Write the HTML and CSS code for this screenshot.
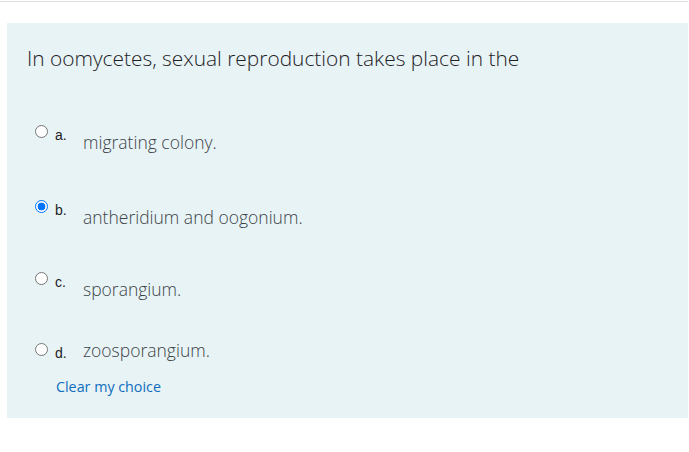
FILE: index.html
```html
<!DOCTYPE html>
<html>
<head>
<meta charset="utf-8">
<link rel="stylesheet" href="styles.css">
</head>
<body>
<div class="topline"></div>
<div class="formulation">
  <div class="qtext">In oomycetes, sexual reproduction takes place in the</div>
  <div class="answers">
    <div class="opt opt-a">
      <span class="radio"></span>
      <span class="letter">a.</span>
      <span class="ans shifted">migrating colony.</span>
    </div>
    <div class="opt opt-b">
      <span class="radio checked"></span>
      <span class="letter">b.</span>
      <span class="ans shifted">antheridium and oogonium.</span>
    </div>
    <div class="opt opt-c">
      <span class="radio"></span>
      <span class="letter">c.</span>
      <span class="ans shifted">sporangium.</span>
    </div>
    <div class="opt opt-d">
      <span class="radio"></span>
      <span class="letter">d.</span>
      <span class="ans inline">zoosporangium.</span>
    </div>
  </div>
  <a class="clear">Clear my choice</a>
</div>
</body>
</html>
```
FILE: styles.css
```css
html, body {
  margin: 0;
  padding: 0;
  background: #fff;
}
body {
  font-family: "Open Sans", "Noto Sans", sans-serif;
  color: #343a40;
}
.topline {
  height: 1px;
  margin-top: 1px;
  width: 688px;
  background: #dee2e6;
}
.formulation {
  margin: 21px 1px 0 7px;
  height: 395px;
  box-sizing: border-box;
  background: #e7f3f5;
  padding: 20px 20px 0 20px;
}
.qtext {
  font-size: 20.9px;
  line-height: 30px;
  font-weight: 300;
  color: #1d2125;
}
.answers {
  margin-top: 49.5px;
  padding-left: 8px;
}
.opt {
  display: flex;
  align-items: flex-start;
}
.opt-a { height: 75px; }
.opt-b { height: 72px; }
.opt-c { height: 71px; }
.opt-d { height: 34px; }
.radio {
  width: 11px;
  height: 11px;
  border: 1px solid #767676;
  border-radius: 50%;
  background: #fff;
  margin-top: 2px;
  flex: none;
  box-sizing: content-box;
}
.radio.checked {
  border-color: #0075ff;
  background: radial-gradient(circle, #0075ff 0 3.6px, #fff 4.2px 100%);
}
.letter {
  font-family: "Liberation Sans", Arial, sans-serif;
  font-size: 14px;
  line-height: 16px;
  color: #1d2125;
  margin-left: 7px;
  margin-top: 4px;
  width: 28px;
  flex: none;
}
.ans {
  font-size: 17.5px;
  line-height: 22px;
  font-weight: 300;
  color: #3d4348;
}
.ans.shifted {
  margin-top: 8px;
}
.ans.inline {
  margin-top: -2px;
}
.clear {
  display: inline-block;
  margin-left: 29px;
  font-size: 14.3px;
  line-height: 20px;
  color: #0f6cbf;
}
```
